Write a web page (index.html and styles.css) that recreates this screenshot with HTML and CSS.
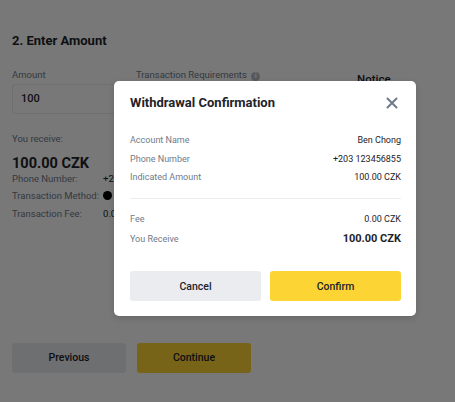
FILE: index.html
```html
<!DOCTYPE html>
<html>
<head>
<meta charset="utf-8">
<link rel="stylesheet" href="styles.css">
</head>
<body>
<div class="page">
  <h2 class="step">2. Enter Amount</h2>
  <div class="form-grid">
    <div class="col-amount">
      <div class="label">Amount</div>
      <div class="input">100</div>
    </div>
    <div class="col-req">
      <div class="label">Transaction Requirements <span class="info">i</span></div>
    </div>
    <div class="col-notice">
      <div class="notice">Notice</div>
    </div>
  </div>
  <div class="receive">
    <div class="label">You receive:</div>
    <div class="big">100.00 CZK</div>
    <div class="kv"><span class="k">Phone Number:</span><span class="v">+203 123456855</span></div>
    <div class="kv"><span class="k">Transaction Method:</span><span class="v"><span class="dot"></span></span></div>
    <div class="kv"><span class="k">Transaction Fee:</span><span class="v">0.00 CZK</span></div>
  </div>
  <div class="actions">
    <button class="btn btn-grey">Previous</button>
    <button class="btn btn-yellow">Continue</button>
  </div>
</div>

<div class="overlay"></div>

<div class="modal">
  <div class="modal-head">
    <div class="modal-title">Withdrawal Confirmation</div>
    <svg class="close" width="12" height="12" viewBox="0 0 12 12"><path d="M1.5 1.5L10.5 10.5M10.5 1.5L1.5 10.5" stroke="#707A8A" stroke-width="2" stroke-linecap="round"/></svg>
  </div>
  <div class="rows">
    <div class="row"><span class="rk">Account Name</span><span class="rv">Ben Chong</span></div>
    <div class="row"><span class="rk">Phone Number</span><span class="rv">+203 123456855</span></div>
    <div class="row"><span class="rk">Indicated Amount</span><span class="rv">100.00 CZK</span></div>
  </div>
  <div class="divider"></div>
  <div class="rows rows-2">
    <div class="row"><span class="rk">Fee</span><span class="rv">0.00 CZK</span></div>
    <div class="row"><span class="rk">You Receive</span><span class="rv strong">100.00 CZK</span></div>
  </div>
  <div class="modal-actions">
    <button class="btn btn-grey">Cancel</button>
    <button class="btn btn-yellow">Confirm</button>
  </div>
</div>
</body>
</html>
```
FILE: styles.css
```css
* { box-sizing: border-box; }
html, body { margin: 0; padding: 0; }
body {
  width: 455px;
  height: 402px;
  overflow: hidden;
  background: #fff;
  font-family: "Roboto", "Noto Sans", sans-serif;
  color: #1E2329;
  position: relative;
}
.page { padding: 32px 12px 0 12px; }
.step { margin: 0; font-size: 13px; font-weight: 700; line-height: 17px; color: #1E2329; }
.form-grid {
  display: grid;
  grid-template-columns: 114px 211px 1fr;
  column-gap: 10px;
  margin-top: 19px;
}
.label { font-size: 9.5px; color: #707A8A; line-height: 14px; white-space: nowrap; }
.info {
  display: inline-block; width: 9px; height: 9px; border-radius: 50%;
  background: #B7BDC6; color: #fff; font-size: 7px; line-height: 9px; text-align: center;
  vertical-align: 0; margin-left: 2px; font-weight: 700;
}
.input {
  margin-top: 2px; height: 30px; border: 1px solid #EAECEF; border-radius: 3px;
  padding-left: 8px; font-size: 11px; font-weight: 500; line-height: 28px; width: 140px;
}
.notice { font-size: 11.5px; font-weight: 500; margin-top: 4px; margin-left: 0; }
.receive { margin-top: 18px; }
.big { font-size: 14.5px; font-weight: 700; margin-top: 9px; line-height: 18px; margin-bottom: -5px; }
.kv { display: flex; font-size: 9.5px; line-height: 14px; margin-top: 3.5px; white-space: nowrap; }
.k { width: 91px; color: #707A8A; }
.v { color: #1E2329; }
.dot { display: inline-block; width: 9px; height: 9px; border-radius: 50%; background: #000; vertical-align: -1px; }
.actions { display: flex; gap: 11px; margin-top: 122px; }
.btn {
  height: 30px; border: 0; border-radius: 3px; font-family: inherit;
  font-size: 10.5px; font-weight: 500; color: #1E2329; padding: 0;
}
.actions .btn { width: 114px; }
.btn-grey { background: #EAECEF; }
.btn-yellow { background: #FCD535; }
.overlay { position: absolute; inset: 0; background: rgba(0,0,0,0.53); }
.modal {
  position: absolute; left: 114px; top: 81px; width: 302px; height: 235px;
  background: #fff; border-radius: 5px; padding: 0 15px 0 16px;
  box-shadow: 0 2px 6px rgba(0,0,0,0.15);
}
.modal-head { display: flex; justify-content: space-between; align-items: center; height: 42px; padding-top: 1px; }
.modal-title { font-size: 13px; font-weight: 700; color: #1E2329; }
.close { margin-right: 3px; }
.rows { display: flex; flex-direction: column; gap: 4.5px; padding-top: 10px; }
.rows-2 { padding-top: 13px; gap: 6px; }
.row { display: flex; justify-content: space-between; align-items: center; font-size: 9px; line-height: 14px; }
.rk { color: #707A8A; }
.rv { color: #1E2329; }
.rv.strong { font-size: 11px; font-weight: 700; }
.divider { height: 1px; background: #EAECEF; margin-top: 14px; }
.modal-actions { display: grid; grid-template-columns: 1fr 1fr; gap: 9px; margin-top: 25px; }
```
